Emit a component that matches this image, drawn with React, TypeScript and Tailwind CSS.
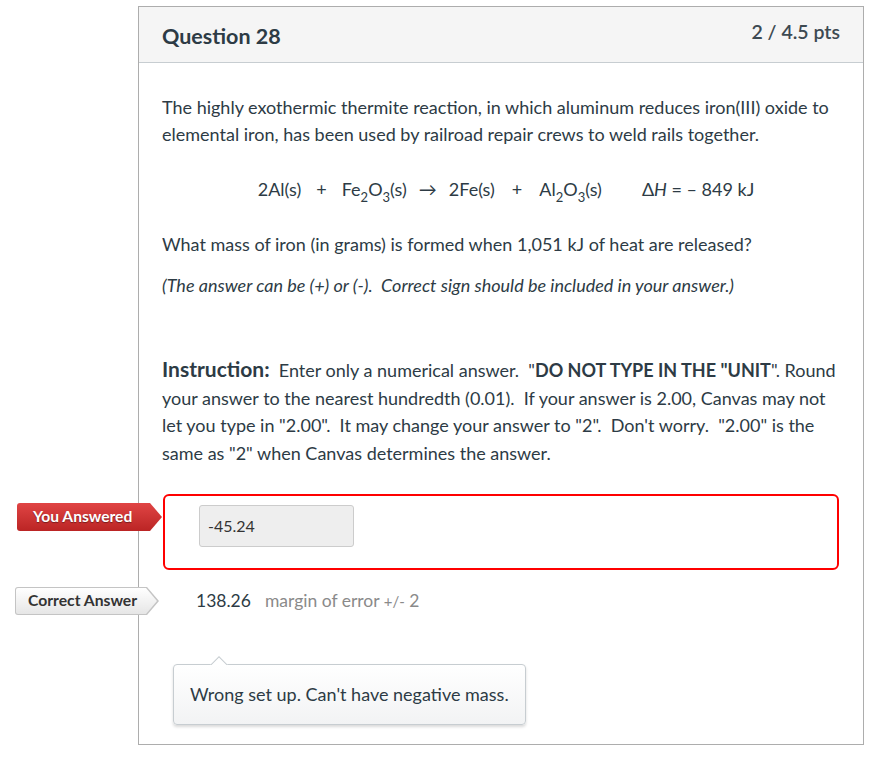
import React from "react";

export default function App() {
  return (
    <div className="w-[879px] h-[757px] bg-white overflow-hidden [font-family:Lato,'Noto_Sans',sans-serif] text-[#2d3b45]">
      <div className="relative ml-[138px] mt-[6px] w-[726px] h-[739px] border border-[#adadad]">
        <div className="h-[56px] bg-[#f5f5f5] border-b border-[#c7cdd1] flex justify-between px-[23px]">
          <div className="pt-[13px] text-[21.5px] font-bold">Question 28</div>
          <div className="pt-[10px] text-[19.5px] font-semibold text-[#3d4a52]">2 / 4.5 pts</div>
        </div>
        <div className="px-[23px] pt-[31px] text-[18px] leading-[27px]">
          <p>
            The highly exothermic thermite reaction, in which aluminum reduces iron(III) oxide to elemental iron,
            has been used by railroad repair crews to weld rails together.
          </p>
          <p className="mt-[28px] text-center pl-[10px]">
            <span>2Al(s)</span>
            <span className="mx-[15px]">+</span>
            <span>Fe<sub className="text-[13px] align-[-3px]">2</sub>O<sub className="text-[13px] align-[-3px]">3</sub>(s)</span>
            <span className="mx-[12px]">→</span>
            <span>2Fe(s)</span>
            <span className="mx-[17px]">+</span>
            <span>Al<sub className="text-[13px] align-[-3px]">2</sub>O<sub className="text-[13px] align-[-3px]">3</sub>(s)</span>
            <span className="ml-[40px]">Δ<i>H</i> = – 849 kJ</span>
          </p>
          <p className="mt-[28px]">What mass of iron (in grams) is formed when 1,051 kJ of heat are released?</p>
          <p className="mt-[14px] italic">(The answer can be (+) or (-).&nbsp; Correct sign should be included in your answer.)</p>
          <p className="mt-[56px] leading-[27.5px]">
            <strong className="text-[21px]">Instruction:</strong>&nbsp; Enter only a numerical answer.&nbsp; "
            <strong>DO NOT TYPE IN THE "UNIT</strong>". Round your answer to the nearest hundredth (0.01).&nbsp; If your
            answer is 2.00, Canvas may not let you type in "2.00".&nbsp; It may change your answer to "2".&nbsp; Don't
            worry.&nbsp; "2.00" is the same as "2" when Canvas determines the answer.
          </p>
        </div>

        <div className="absolute left-[-122px] top-[496px] w-[145px] h-[28px] [clip-path:polygon(0_0,calc(100%-12px)_0,100%_50%,calc(100%-12px)_100%,0_100%)] bg-gradient-to-b from-[#e04444] to-[#bb2424] rounded-l-[3px] flex items-center pl-[16px] text-white font-bold text-[15.6px] [text-shadow:0_1px_1px_rgba(0,0,0,0.4)]">
          You Answered
        </div>
        <div className="absolute left-[-124px] top-[580px] w-[144px] h-[28px] [clip-path:polygon(0_0,calc(100%-12px)_0,100%_50%,calc(100%-12px)_100%,0_100%)] bg-[#c4c4c4] rounded-l-[3px]">
          <div className="absolute left-[1px] top-[1px] w-[141px] h-[26px] [clip-path:polygon(0_0,calc(100%-11px)_0,100%_50%,calc(100%-11px)_100%,0_100%)] bg-gradient-to-b from-[#ffffff] to-[#e6e6e6] rounded-l-[2px] flex items-center pl-[12px] text-[15.7px] font-bold text-[#333]">
            Correct Answer
          </div>
        </div>

        <div className="mx-[24px] mt-[27px] h-[76px] border-2 border-[#ff0000] rounded-[6px] pt-[9px] pl-[34px]">
          <div className="w-[155px] h-[42px] bg-[#eeeeee] border border-[#cccccc] rounded-[3px] flex items-center pl-[8px] text-[16px] text-[#333]">
            -45.24
          </div>
        </div>

        <div className="mt-[18px] pl-[57px] h-[26px] flex items-baseline text-[17.5px]">
          <span className="text-[#2d3b45]">138.26</span>
          <span className="ml-[14px] text-[#8a8a8a]">
            margin of error <span className="text-[15px]">+/-</span> 2
          </span>
        </div>

        <div className="relative ml-[34px] mt-[50px] w-[353px] h-[61px] rounded-[4px] border border-[#c7cdd1] bg-gradient-to-b from-[#ffffff] to-[#f2f3f4] shadow-[0_2px_3px_rgba(0,0,0,0.15)] flex items-center pl-[16px] text-[18px]">
          <div className="absolute left-[34px] top-[-12px] w-[22px] h-[12px] overflow-hidden">
            <div className="absolute left-[4px] top-[6px] w-[14px] h-[14px] rotate-45 bg-white border border-[#c7cdd1]" />
          </div>
          Wrong set up. Can't have negative mass.
        </div>
      </div>
    </div>
  );
}
